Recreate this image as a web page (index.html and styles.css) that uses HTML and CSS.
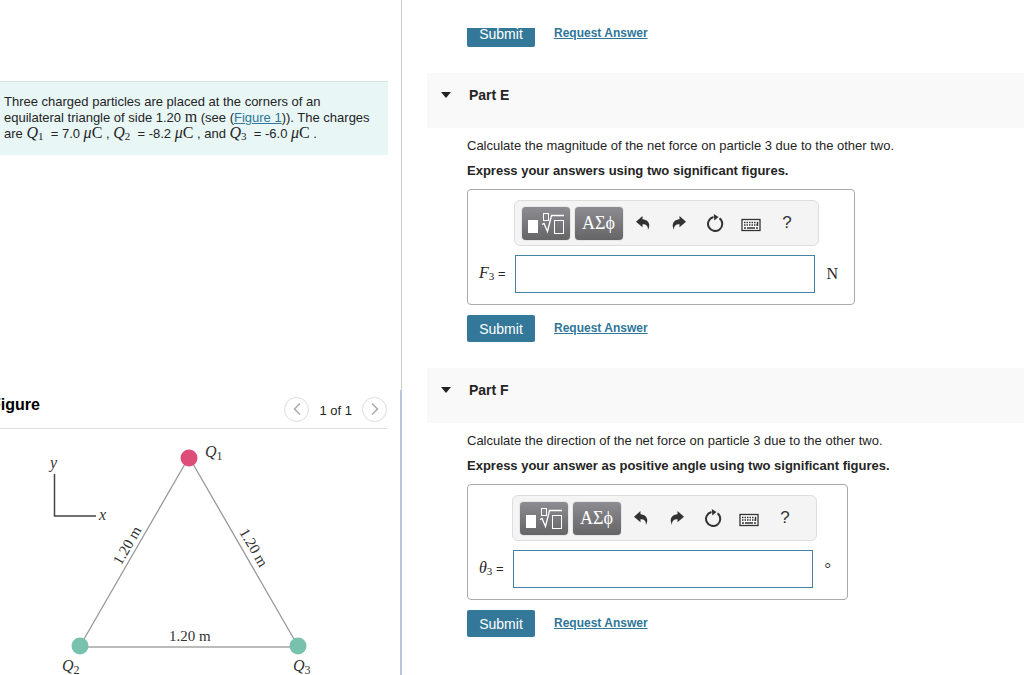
FILE: index.html
```html
<!DOCTYPE html>
<html lang="en">
<head>
<meta charset="utf-8">
<title>Net force on charged particles</title>
<link rel="stylesheet" href="styles.css">
</head>
<body>
<svg class="sprite" aria-hidden="true">
  <symbol id="template" viewBox="0 0 36 24">
    <rect x="0" y="9" width="10" height="13" fill="#fff"/>
    <g fill="none" stroke="#fff">
      <rect x="15.500" y="2.500" width="5" height="7"/>
      <path d="M14 13.500l2-1 3.500 8L23.500 4.500H36" stroke-width="1.300"/>
      <rect x="26.500" y="9.500" width="9" height="13"/>
    </g>
  </symbol>
  <symbol id="undo" viewBox="0 0 16 16">
    <path d="M1 6.800L7.500 1v3.300c4.500.2 7.300 3.200 6.700 7.200-.2 1.300-.7 2.500-1.300 3.500.4-3.900-1.500-5.700-5.400-5.700v3z" fill="#333"/>
  </symbol>
  <symbol id="redo" viewBox="0 0 16 16">
    <path d="M15 6.800L8.500 1v3.300C4 4.500 1.200 7.500 1.800 11.500c.2 1.300.7 2.500 1.300 3.500-.4-3.900 1.500-5.700 5.400-5.700v3z" fill="#333"/>
  </symbol>
  <symbol id="reset" viewBox="0 0 18 18">
    <path d="M13.500 4.300A7.100 7.100 0 1 1 7.500 3" fill="none" stroke="#333" stroke-width="2"/>
    <path d="M7.800 0l4.700 2.900-4.200 3.600z" fill="#333"/>
  </symbol>
  <symbol id="keyboard" viewBox="0 0 20 14">
    <rect x="1" y="1.500" width="18" height="11" fill="#fff" stroke="#333" stroke-width="1.300"/>
    <path d="M3 4.500h12M3 7h13" stroke="#333" stroke-width="1.500" stroke-dasharray="1.500 1"/>
    <path d="M3 10h2M6 10h8M15 10h2M16.500 3.800V8" stroke="#333" stroke-width="1.500"/>
  </symbol>
</svg>
<div class="page">
  <aside class="side">
    <div class="side-top">
      <p class="problem">Three charged particles are placed at the corners of an equilateral triangle of side 1.20 <span class="math">m</span> (see (<a href="#figure">Figure 1</a>)). The charges are <span class="math"><i>Q</i><sub>1</sub></span> &nbsp;= 7.0 <span class="math"><i>μ</i>C</span> , <span class="math"><i>Q</i><sub>2</sub></span> &nbsp;= -8.2 <span class="math"><i>μ</i>C</span> , and <span class="math"><i>Q</i><sub>3</sub></span> &nbsp;= -6.0 <span class="math"><i>μ</i>C</span> .</p>
    </div>
    <section class="figure" id="figure">
      <header class="figure-head">
        <h2>Figure</h2>
        <nav class="pager">
          <button class="round" aria-label="Previous figure"><svg viewBox="0 0 8 14" width="8" height="14"><path d="M7 1.500L1.500 7 7 12.500"/></svg></button>
          <span>1 of 1</span>
          <button class="round" aria-label="Next figure"><svg viewBox="0 0 8 14" width="8" height="14"><path d="M1 1.500L6.500 7 1 12.500"/></svg></button>
        </nav>
      </header>
      <svg class="diagram" viewBox="0 0 387 260" role="img" aria-label="Charges at the corners of an equilateral triangle">
        <path d="M54.500 45v42H96" fill="none" stroke="#444" stroke-width="1.500"/>
        <path d="M189 28L80 217M189 28L298 217" stroke="#999" stroke-width="1.300"/>
        <path d="M80 218H298" stroke="#bbb" stroke-width="2"/>
        <circle cx="189" cy="29" r="8.500" fill="#de4c78"/>
        <circle cx="80" cy="217" r="8.500" fill="#78c2ad"/>
        <circle cx="298" cy="217" r="8.500" fill="#78c2ad"/>
        <g class="italic">
          <text x="50" y="39">y</text>
          <text x="99" y="91">x</text>
          <text x="205" y="28">Q<tspan class="index" dy="3">1</tspan></text>
          <text x="62" y="242">Q<tspan class="index" dy="3">2</tspan></text>
          <text x="293" y="242">Q<tspan class="index" dy="3">3</tspan></text>
        </g>
        <text x="169" y="212">1.20 m</text>
        <text transform="translate(121 137) rotate(-60)">1.20 m</text>
        <text transform="translate(239 103) rotate(60)">1.20 m</text>
      </svg>
    </section>
  </aside>
  <main class="main">
    <div class="actions first">
      <button class="submit">Submit</button>
      <a class="request" href="#">Request Answer</a>
    </div>

    <section>
      <h2 class="part"><span class="caret"></span>Part E</h2>
      <div class="body">
        <p>Calculate the magnitude of the net force on particle 3 due to the other two.</p>
        <p class="strong">Express your answers using two significant figures.</p>
        <div class="answer">
          <div class="toolbar">
            <button class="tool" aria-label="Templates"><svg width="36" height="24"><use href="#template"/></svg></button>
            <button class="tool" aria-label="Symbols">ΑΣϕ</button>
            <button class="icon" aria-label="Undo"><svg width="16" height="16"><use href="#undo"/></svg></button>
            <button class="icon" aria-label="Redo"><svg width="16" height="16"><use href="#redo"/></svg></button>
            <button class="icon" aria-label="Reset"><svg width="18" height="18"><use href="#reset"/></svg></button>
            <button class="icon" aria-label="Keyboard shortcuts"><svg class="keys" width="20" height="14"><use href="#keyboard"/></svg></button>
            <button class="icon" aria-label="Help">?</button>
          </div>
          <label class="name" for="force"><span class="math"><i>F</i><sub>3</sub></span> =</label>
          <input class="entry" id="force" type="text">
          <span class="unit">N</span>
        </div>
        <div class="actions">
          <button class="submit">Submit</button>
          <a class="request" href="#">Request Answer</a>
        </div>
      </div>
    </section>

    <section>
      <h2 class="part"><span class="caret"></span>Part F</h2>
      <div class="body">
        <p>Calculate the direction of the net force on particle 3 due to the other two.</p>
        <p class="strong">Express your answer as positive angle using two significant figures.</p>
        <div class="answer">
          <div class="toolbar">
            <button class="tool" aria-label="Templates"><svg width="36" height="24"><use href="#template"/></svg></button>
            <button class="tool" aria-label="Symbols">ΑΣϕ</button>
            <button class="icon" aria-label="Undo"><svg width="16" height="16"><use href="#undo"/></svg></button>
            <button class="icon" aria-label="Redo"><svg width="16" height="16"><use href="#redo"/></svg></button>
            <button class="icon" aria-label="Reset"><svg width="18" height="18"><use href="#reset"/></svg></button>
            <button class="icon" aria-label="Keyboard shortcuts"><svg class="keys" width="20" height="14"><use href="#keyboard"/></svg></button>
            <button class="icon" aria-label="Help">?</button>
          </div>
          <label class="name" for="angle"><span class="math"><i>θ</i><sub>3</sub></span> =</label>
          <input class="entry" id="angle" type="text">
          <span class="unit">°</span>
        </div>
        <div class="actions">
          <button class="submit">Submit</button>
          <a class="request" href="#">Request Answer</a>
        </div>
      </div>
    </section>
  </main>
</div>
</body>
</html>
```
FILE: styles.css
```css
* { box-sizing: border-box; }
body {
  margin: 0;
  background: #fff;
  color: #252525;
  font: 13px/16px "Liberation Sans", Arial, sans-serif;
}
h2, p { margin: 0; }
button { font: inherit; border: 0; padding: 0; cursor: pointer; }
a { color: #2f7699; }
.sprite { display: none; }

.page {
  display: grid;
  grid-template-columns: 402px 1fr;
  height: 100vh;
  overflow: hidden;
}

/* Left column */
.side { display: flex; flex-direction: column; min-height: 0; }
.side-top {
  flex: 0 0 390px;
  padding: 81px 13px 0 0;
  border-right: 1px solid #ccc;
}
.problem {
  padding: 12px 8px 13px 4px;
  background: #e8f6f6;
  border-top: 1px solid #dbe3e3;
}
.math { font-family: "Liberation Serif", "Times New Roman", serif; font-size: 16px; line-height: 0; }
.math sub { font-size: 11px; line-height: 0; vertical-align: -2px; }
.figure {
  flex: 1;
  min-height: 0;
  overflow: hidden;
  padding-right: 13px;
  border-right: 2px solid #b6c6dc;
}
.figure-head {
  display: flex;
  align-items: center;
  justify-content: space-between;
  height: 39px;
  border-bottom: 1px solid #ddd;
}
.figure-head h2 { margin-left: -9px; padding-bottom: 8px; font-size: 16px; color: #000; }
.pager { display: flex; align-items: center; gap: 10px; }
.pager span { padding-top: 3px; }
.round {
  display: grid;
  place-items: center;
  width: 25px;
  height: 25px;
  border: 1px solid #ddd;
  border-radius: 50%;
  background: #fff;
}
.round path { fill: none; stroke: #aaa; stroke-width: 1.5; }
.diagram {
  display: block;
  width: 100%;
  font: 15px "Liberation Serif", "Times New Roman", serif;
  fill: #333;
}
.italic { font-style: italic; font-size: 16px; }
.index { font-style: normal; font-size: 12px; }

/* Right column */
.main { margin: 28px 0 0 25px; overflow: hidden; }
.actions { display: flex; align-items: center; gap: 19px; margin-top: 10px; }
.first { margin: -8px 0 26px 40px; }
.submit {
  width: 68px;
  height: 27px;
  border-radius: 2px;
  background: #347899;
  color: #fff;
  font-size: 14px;
}
.request { font-size: 12px; font-weight: bold; padding-bottom: 2px; }
.part {
  display: flex;
  align-items: center;
  gap: 18px;
  height: 55px;
  padding: 0 0 11px 14px;
  background: #f9f9f9;
  font-size: 14px;
}
.caret { border: 5px solid transparent; border-top: 6px solid #222; border-bottom: 0; }
.body { padding: 10px 0 26px 40px; }
.strong { margin: 9px 0 10px; font-weight: bold; }

.answer {
  display: grid;
  grid-template-columns: auto 305px auto;
  grid-template-rows: 46px 38px;
  align-items: center;
  gap: 9px 8px;
  width: fit-content;
  padding: 10px 16px 11px 11px;
  border: 1px solid #aaa;
  border-radius: 4px;
}
.toolbar {
  grid-column: 2;
  display: flex;
  align-items: center;
  gap: 5px;
  height: 46px;
  padding: 0 7px;
  border: 1px solid #ddd;
  border-radius: 6px;
  background: #f4f4f4;
}
.tool {
  display: grid;
  place-items: center;
  width: 48px;
  height: 33px;
  border-radius: 4px;
  background: linear-gradient(#8d8c92, #656466);
  box-shadow: 0 0 1px #666;
  color: #fff;
  font: 18px "Liberation Serif", "Times New Roman", serif;
}
.icon {
  display: grid;
  place-items: center;
  width: 31px;
  height: 33px;
  background: transparent;
  color: #333;
  font-size: 17px;
}
.keys { margin-top: 3px; }
.name { grid-column: 1; white-space: nowrap; }
.entry {
  width: 300px;
  height: 38px;
  margin-left: 1px;
  padding: 0 8px;
  border: 1px solid #4282a5;
  background: #fff;
  font: inherit;
}
.unit { font: 16px "Liberation Serif", "Times New Roman", serif; }
```
